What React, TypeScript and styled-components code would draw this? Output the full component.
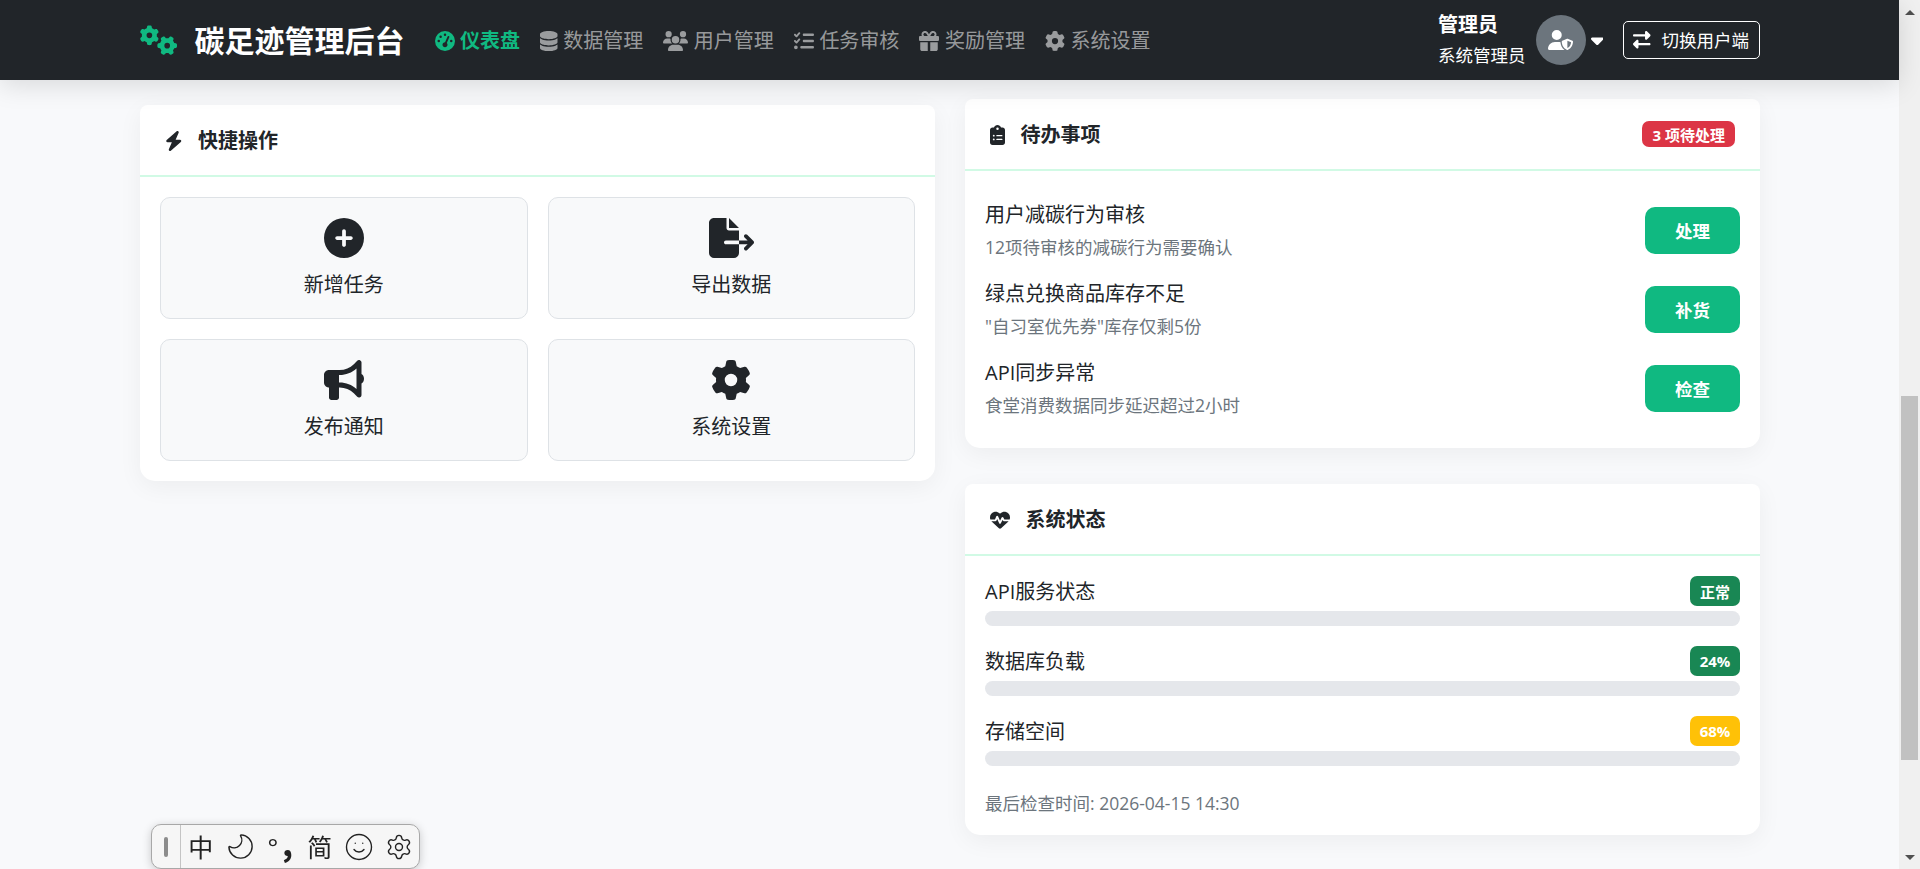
import React from "react";
import styled, { createGlobalStyle } from "styled-components";
import {
  FaGears,
  FaGaugeHigh,
  FaDatabase,
  FaUsers,
  FaListCheck,
  FaGift,
  FaGear,
  FaUserShield,
  FaCaretDown,
  FaRightLeft,
  FaBolt,
  FaClipboardList,
  FaHeartPulse,
  FaCirclePlus,
  FaFileExport,
  FaBullhorn,
} from "react-icons/fa6";
import { Moon, Smile, Settings } from "lucide-react";

// ratio = width of the fa glyph / its height
const navLinks = [
  { label: "仪表盘", Icon: FaGaugeHigh, ratio: 1, active: true },
  { label: "数据管理", Icon: FaDatabase, ratio: 0.875 },
  { label: "用户管理", Icon: FaUsers, ratio: 1.25 },
  { label: "任务审核", Icon: FaListCheck, ratio: 1 },
  { label: "奖励管理", Icon: FaGift, ratio: 1 },
  { label: "系统设置", Icon: FaGear, ratio: 1 },
];

const quickActions = [
  { label: "新增任务", Icon: FaCirclePlus, ratio: 1 },
  { label: "导出数据", Icon: FaFileExport, ratio: 1.125 },
  { label: "发布通知", Icon: FaBullhorn, ratio: 1 },
  { label: "系统设置", Icon: FaGear, ratio: 1 },
];

const todos = [
  { title: "用户减碳行为审核", desc: "12项待审核的减碳行为需要确认", action: "处理" },
  { title: "绿点兑换商品库存不足", desc: "\"自习室优先券\"库存仅剩5份", action: "补货" },
  { title: "API同步异常", desc: "食堂消费数据同步延迟超过2小时", action: "检查" },
];

const statuses = [
  { label: "API服务状态", value: "正常", color: "#198754" },
  { label: "数据库负载", value: "24%", color: "#198754" },
  { label: "存储空间", value: "68%", color: "#ffc107" },
];

const App = () => {
  return (
    <>
      <GlobalStyle />
      <Screen>
        <Page>
          <Navbar>
            <Brand>
              <BrandIcon $ratio={1.25}>
                <FaGears />
              </BrandIcon>
              <BrandName>碳足迹管理后台</BrandName>
            </Brand>
            <NavLinks>
              {navLinks.map(({ label, Icon, ratio, active }) => (
                <NavLink key={label} $active={active}>
                  <Glyph $ratio={ratio}>
                    <Icon />
                  </Glyph>
                  {label}
                </NavLink>
              ))}
            </NavLinks>
            <UserArea>
              <UserInfo>
                <UserName>管理员</UserName>
                <UserRole>系统管理员</UserRole>
              </UserInfo>
              <Avatar>
                <Glyph $ratio={1.25}>
                  <FaUserShield />
                </Glyph>
              </Avatar>
              <Caret $ratio={0.625}>
                <FaCaretDown />
              </Caret>
              <SwitchButton>
                <Glyph $ratio={1}>
                  <FaRightLeft />
                </Glyph>
                切换用户端
              </SwitchButton>
            </UserArea>
          </Navbar>

          <Content>
            <LeftColumn>
              <Card>
                <CardHeader>
                  <CardTitle>
                    <Glyph $ratio={0.875}>
                      <FaBolt />
                    </Glyph>
                    快捷操作
                  </CardTitle>
                </CardHeader>
                <ActionGrid>
                  {quickActions.map(({ label, Icon, ratio }) => (
                    <ActionButton key={label}>
                      <ActionIcon $ratio={ratio}>
                        <Icon />
                      </ActionIcon>
                      {label}
                    </ActionButton>
                  ))}
                </ActionGrid>
              </Card>
            </LeftColumn>

            <RightColumn>
              <Card>
                <CardHeader>
                  <CardTitle>
                    <Glyph $ratio={0.75}>
                      <FaClipboardList />
                    </Glyph>
                    待办事项
                  </CardTitle>
                  <CountBadge>3 项待处理</CountBadge>
                </CardHeader>
                <TodoList>
                  {todos.map((todo) => (
                    <TodoRow key={todo.title}>
                      <div>
                        <TodoTitle>{todo.title}</TodoTitle>
                        <TodoDesc>{todo.desc}</TodoDesc>
                      </div>
                      <TodoButton>{todo.action}</TodoButton>
                    </TodoRow>
                  ))}
                </TodoList>
              </Card>

              <Card>
                <CardHeader>
                  <CardTitle>
                    <Glyph $ratio={1}>
                      <FaHeartPulse />
                    </Glyph>
                    系统状态
                  </CardTitle>
                </CardHeader>
                <StatusBody>
                  {statuses.map((status) => (
                    <StatusItem key={status.label}>
                      <StatusHead>
                        <StatusLabel>{status.label}</StatusLabel>
                        <StatusBadge $color={status.color}>{status.value}</StatusBadge>
                      </StatusHead>
                      <StatusBar />
                    </StatusItem>
                  ))}
                  <LastCheck>最后检查时间: 2026-04-15 14:30</LastCheck>
                </StatusBody>
              </Card>
            </RightColumn>
          </Content>
        </Page>

        <Scrollbar>
          <ArrowBox>
            <ArrowUp />
          </ArrowBox>
          <Thumb />
          <ArrowBox>
            <ArrowDown />
          </ArrowBox>
        </Scrollbar>

        <ImeBar>
          <ImeHandle>
            <ImeGrip />
          </ImeHandle>
          <ImeItem>中</ImeItem>
          <ImeItem>
            <MoonIcon size={31} strokeWidth={1.1} />
          </ImeItem>
          <ImeItem>
            °<ImeComma>,</ImeComma>
          </ImeItem>
          <ImeItem>简</ImeItem>
          <ImeItem>
            <Smile size={30} strokeWidth={1.1} />
          </ImeItem>
          <ImeItem>
            <Settings size={28} strokeWidth={1.2} />
          </ImeItem>
        </ImeBar>
      </Screen>
    </>
  );
};

// Styled components

const GlobalStyle = createGlobalStyle`
  html, body {
    margin: 0;
    padding: 0;
    height: 100%;
    overflow: hidden;
  }

  body {
    font-family: "Open Sans", "Noto Sans CJK SC", sans-serif;
    color: #212529;
    background-color: #f8f9fb;
  }

  * {
    box-sizing: border-box;
  }
`;

const Glyph = styled.span<{ $ratio: number }>`
  flex: none;
  display: inline-flex;

  svg {
    width: ${(p) => p.$ratio}em;
    height: 1em;
  }
`;

const Screen = styled.div`
  display: flex;
  width: 1920px;
  height: 869px;
  overflow: hidden;
`;

const Page = styled.div`
  flex: 1;
  min-width: 0;
  display: flex;
  flex-direction: column;
  background-color: #f8f9fb;
`;

const Navbar = styled.header`
  position: relative;
  z-index: 2;
  flex: none;
  height: 80px;
  padding: 0 139px 0 140px;
  display: flex;
  align-items: center;
  background-color: #212529;
  box-shadow: 0 5px 25px rgba(0, 0, 0, 0.13);
`;

const Brand = styled.div`
  display: flex;
  align-items: center;
  gap: 17px;
  margin-right: 30px;
`;

const BrandIcon = styled(Glyph)`
  font-size: 30px;
  color: #10b981;
`;

const BrandName = styled.span`
  padding-top: 1px;
  font-size: 30px;
  line-height: 40px;
  font-weight: 700;
  color: #fff;
  white-space: nowrap;
`;

const NavLinks = styled.nav`
  display: flex;
  align-items: center;
  gap: 20px;
`;

const NavLink = styled.a<{ $active?: boolean }>`
  display: flex;
  align-items: center;
  gap: 5.6px;
  padding-top: 2px;
  font-size: 20px;
  line-height: 30px;
  white-space: nowrap;
  font-weight: ${(p) => (p.$active ? 700 : 400)};
  color: ${(p) => (p.$active ? "#10b981" : "rgba(255, 255, 255, 0.55)")};
`;

const UserArea = styled.div`
  margin-left: auto;
  display: flex;
  align-items: center;
`;

const UserInfo = styled.div`
  display: flex;
  flex-direction: column;
  gap: 4px;
  margin-right: 10px;
  color: #fff;
`;

const UserName = styled.div`
  font-size: 20px;
  line-height: 26px;
  font-weight: 700;
`;

const UserRole = styled.div`
  font-size: 17.5px;
  line-height: 26px;
`;

const Avatar = styled.div`
  width: 50px;
  height: 50px;
  border-radius: 50%;
  background-color: #6c757d;
  display: flex;
  align-items: center;
  justify-content: center;
  color: #fff;
  font-size: 20px;
`;

const Caret = styled(Glyph)`
  margin-left: 5px;
  margin-right: 20px;
  font-size: 20px;
  color: #fff;
`;

const SwitchButton = styled.button`
  height: 38px;
  padding: 0 10px 0 9px;
  display: flex;
  align-items: center;
  gap: 11px;
  border: 1px solid #fff;
  border-radius: 5px;
  background: transparent;
  color: #fff;
  font-family: inherit;
  font-size: 17.5px;
  line-height: 26px;
  white-space: nowrap;
`;

const Content = styled.main`
  display: grid;
  grid-template-columns: 795px 795px;
  gap: 30px;
  padding: 19px 0 0 140px;
  align-items: start;
`;

const LeftColumn = styled.div`
  padding-top: 6px;
`;

const RightColumn = styled.div`
  display: flex;
  flex-direction: column;
  gap: 36px;
`;

const Card = styled.section`
  background-color: #fff;
  border-radius: 8px 8px 15px 15px;
  box-shadow: 0 6px 25px rgba(0, 0, 0, 0.05);
`;

const CardHeader = styled.div`
  height: 72px;
  padding: 0 20px 0 25px;
  display: flex;
  align-items: center;
  justify-content: space-between;
  border-bottom: 2px solid #d1fae5;
`;

const CardTitle = styled.h2`
  margin: 0;
  padding-top: 2px;
  display: flex;
  align-items: center;
  gap: 15.5px;
  font-size: 20px;
  line-height: 30px;
  font-weight: 700;
`;

const CountBadge = styled.span`
  height: 26px;
  padding: 0 10px 0 11px;
  margin-right: 5px;
  display: flex;
  align-items: center;
  border-radius: 7px;
  background-color: #dc3545;
  color: #fff;
  font-size: 15px;
  font-weight: 700;
`;

const ActionGrid = styled.div`
  display: grid;
  grid-template-columns: 1fr 1fr;
  gap: 20px;
  padding: 20px;
`;

const ActionButton = styled.button`
  height: 122px;
  padding: 20px 0 0;
  display: flex;
  flex-direction: column;
  align-items: center;
  border: 1px solid #dee2e6;
  border-radius: 10px;
  background-color: #f8f9fa;
  color: #212529;
  font-family: inherit;
  font-size: 20px;
  line-height: 30px;
`;

const ActionIcon = styled(Glyph)`
  font-size: 40px;
  margin-bottom: 12px;
`;

const TodoList = styled.div`
  display: flex;
  flex-direction: column;
  gap: 18px;
  padding: 29px 20px 29px;
`;

const TodoRow = styled.div`
  display: flex;
  align-items: center;
  justify-content: space-between;
`;

const TodoTitle = styled.div`
  font-size: 20px;
  line-height: 30px;
  margin-bottom: 4px;
`;

const TodoDesc = styled.div`
  height: 27px;
  font-size: 17.5px;
  line-height: 26px;
  color: #6c757d;
`;

const TodoButton = styled.button`
  width: 95px;
  height: 47px;
  border: none;
  border-radius: 10px;
  background-color: #10b981;
  color: #fff;
  font-family: inherit;
  font-size: 17.5px;
  font-weight: 700;
`;

const StatusBody = styled.div`
  padding: 20px 20px 19px;
`;

const StatusItem = styled.div`
  margin-bottom: 20px;
`;

const StatusHead = styled.div`
  height: 30px;
  margin-bottom: 5px;
  display: flex;
  align-items: center;
  justify-content: space-between;
`;

const StatusLabel = styled.span`
  padding-top: 2px;
  font-size: 20px;
  line-height: 30px;
`;

const StatusBadge = styled.span<{ $color: string }>`
  width: 50px;
  height: 30px;
  display: flex;
  align-items: center;
  justify-content: center;
  border-radius: 7px;
  background-color: ${(p) => p.$color};
  color: #fff;
  font-size: 15px;
  font-weight: 700;
`;

const StatusBar = styled.div`
  height: 15px;
  border-radius: 8px;
  background-color: #e5e7eb;
`;

const LastCheck = styled.div`
  margin-top: 24px;
  font-size: 17.5px;
  line-height: 26px;
  color: #6c757d;
`;

const Scrollbar = styled.aside`
  flex: none;
  width: 21px;
  display: flex;
  flex-direction: column;
  align-items: center;
  justify-content: space-between;
  background-color: #f0f0f0;
`;

const ArrowBox = styled.div`
  height: 24px;
  display: flex;
  align-items: center;
  justify-content: center;
`;

const ArrowUp = styled.span`
  border-left: 5px solid transparent;
  border-right: 5px solid transparent;
  border-bottom: 5px solid #505050;
`;

const ArrowDown = styled.span`
  border-left: 5px solid transparent;
  border-right: 5px solid transparent;
  border-top: 5px solid #505050;
`;

const Thumb = styled.div`
  width: 17px;
  height: 364px;
  margin-top: 372px;
  margin-bottom: auto;
  background-color: #c1c1c1;
`;

const ImeBar = styled.div`
  position: fixed;
  left: 151px;
  top: 824px;
  z-index: 5;
  width: 269px;
  height: 45px;
  display: flex;
  align-items: center;
  border: 1px solid #a8a8a8;
  border-radius: 10px;
  background-color: #f6f6f6;
  box-shadow: 0 2px 10px rgba(0, 0, 0, 0.2);
`;

const ImeHandle = styled.div`
  width: 29px;
  height: 100%;
  display: flex;
  align-items: center;
  justify-content: center;
  border-right: 1px solid #c4c4c4;
`;

const ImeGrip = styled.span`
  width: 4px;
  height: 20px;
  border-radius: 2px;
  background-color: #8c8c8c;
`;

const ImeItem = styled.div`
  width: 40px;
  display: flex;
  align-items: center;
  justify-content: center;
  font-size: 25px;
  line-height: 30px;
  color: #222;
`;

const ImeComma = styled.span`
  margin-left: 4px;
  font-family: "Noto Sans CJK SC", sans-serif;
  font-size: 30px;
  line-height: 30px;
  font-weight: 900;
  transform: translateY(-4px);
`;

const MoonIcon = styled(Moon)`
  transform: scaleX(-1);
`;

export default App;
